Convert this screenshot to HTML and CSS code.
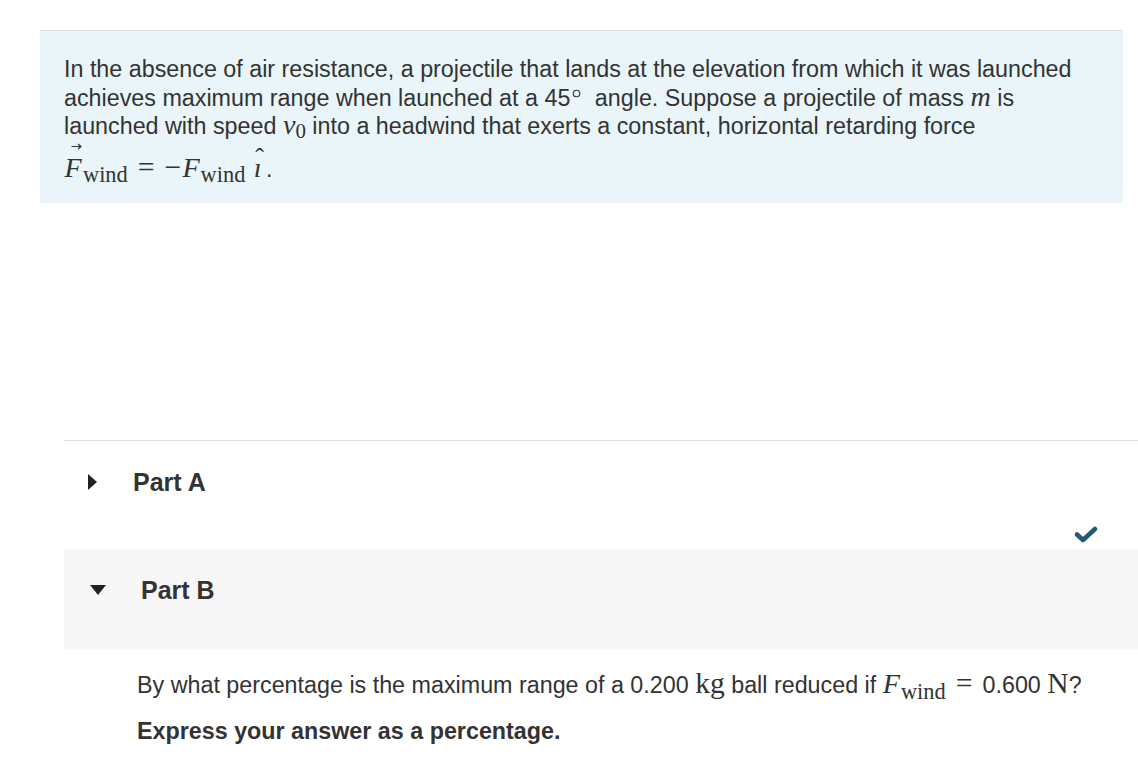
FILE: index.html
```html
<!DOCTYPE html>
<html>
<head>
<meta charset="utf-8">
<link rel="stylesheet" href="styles.css">
</head>
<body>
<div class="intro">
  <p class="intro-text">In the absence of air resistance, a projectile that lands at the elevation from which it was launched achieves maximum range when launched at a 45<svg class="deg" width="9" height="9" viewBox="0 0 9 9"><circle cx="4.5" cy="4.5" r="3.3" fill="none" stroke="#333" stroke-width="1.1"/></svg> angle. Suppose a projectile of mass <span class="mi">m</span> is launched with speed <span class="mi">v</span><span class="msub">0</span> into a headwind that exerts a constant, horizontal retarding force <span class="math"><span class="accent"><span class="acc"><svg width="11" height="7" viewBox="0 0 11 7"><path d="M0.5 3.5H9.5M7 1L10 3.5L7 6" fill="none" stroke="#333" stroke-width="1.2"/></svg></span><span class="mi">F</span></span><span class="rsub">wind</span><span class="mo">=</span><span class="mo2">−</span><span class="mi">F</span><span class="rsub">wind</span><span class="accent hat"><span class="acc">ˆ</span><span class="mi">ı</span></span></span>.</p>
</div>

<div class="parts">
  <div class="part part-a">
    <div class="part-head">
      <span class="tri-right"></span>
      <span class="part-title">Part A</span>
    </div>
    <svg class="check" width="24" height="18" viewBox="0 0 24 18"><path d="M3 9.5L9 15L21 4" fill="none" stroke="#1f5a72" stroke-width="4.5" stroke-linecap="round" stroke-linejoin="round"/></svg>
  </div>
  <div class="part part-b">
    <div class="part-head">
      <span class="tri-down"></span>
      <span class="part-title">Part B</span>
    </div>
  </div>
  <div class="question">
    <p class="q-text">By what percentage is the maximum range of a 0.200 <span class="unit">kg</span> ball reduced if <span class="mi">F</span><span class="rsub">wind</span><span class="mo">=</span>0.600 <span class="unit">N</span>?</p>
    <p class="q-instr">Express your answer as a percentage.</p>
  </div>
</div>
</body>
</html>
```
FILE: styles.css
```css
body {
  margin: 0;
  font-family: "Liberation Sans", Arial, Helvetica, sans-serif;
  color: #333;
  background: #fff;
}

.intro {
  margin: 30px 15px 0 40px;
  background: #e9f5f8;
  border-top: 1px solid #dcdcdc;
  padding: 24px 24px 20px 24px;
}

.intro-text {
  margin: 0;
  font-size: 23.3px;
  line-height: 28.5px;
}

.mi {
  font-family: "Liberation Serif", "Times New Roman", serif;
  font-style: italic;
  font-size: 1.21em;
  line-height: 0;
}

.msub {
  font-family: "Liberation Serif", "Times New Roman", serif;
  font-size: 0.9em;
  vertical-align: -0.2em;
  line-height: 0;
}

.rsub {
  font-family: "Liberation Serif", "Times New Roman", serif;
  font-size: 0.96em;
  vertical-align: -0.25em;
  line-height: 0;
  margin-left: 1px;
}

.deg {
  vertical-align: 8px;
  margin: 0 7px 0 2px;
}

.math {
  white-space: nowrap;
}

.accent {
  display: inline-block;
  text-align: center;
  line-height: 1;
  vertical-align: baseline;
}

.accent .acc {
  display: block;
  height: 11px;
  line-height: 11px;
  font-size: 26px;
}

.accent .acc svg {
  display: block;
  margin: 2px 0 0 7px;
}

.accent .mi {
  display: block;
  font-size: 28px;
  line-height: 1;
}

.hat .acc {
  font-family: "Liberation Serif", serif;
  line-height: 30px;
  padding-left: 4px;
}

.hat {
  margin-left: 6px;
  margin-right: 2px;
}

.mo {
  font-family: "Liberation Serif", serif;
  font-size: 1.28em;
  margin: 0 10px;
  line-height: 0;
}

.mo2 {
  font-family: "Liberation Serif", serif;
  font-size: 1.28em;
  line-height: 0;
  margin-right: 1px;
}

.parts {
  margin: 237px 0 0 64px;
}

.part {
  display: flex;
  align-items: flex-start;
}

.part-head {
  display: flex;
  align-items: center;
  height: 30px;
}

.part-title {
  font-weight: bold;
  font-size: 25px;
  line-height: 30px;
}

.part-a {
  border-top: 1px solid #ddd;
  height: 108px;
  padding-left: 24px;
}

.part-a .part-head {
  margin-top: 26px;
}

.tri-right {
  width: 0;
  height: 0;
  border-top: 8px solid transparent;
  border-bottom: 8px solid transparent;
  border-left: 9px solid #222;
  margin-right: 36px;
}

.check {
  margin-left: auto;
  margin-right: 40px;
  align-self: flex-end;
  margin-bottom: 6px;
}

.part-b {
  background: #f7f7f7;
  height: 100px;
  padding-left: 26px;
}

.part-b .part-head {
  margin-top: 26px;
}

.tri-down {
  width: 0;
  height: 0;
  border-left: 8px solid transparent;
  border-right: 8px solid transparent;
  border-top: 10px solid #222;
  margin-right: 35px;
}

.question {
  padding: 21px 0 0 73px;
  font-size: 23.3px;
}

.q-text {
  margin: 0;
  line-height: 30px;
}

.unit {
  font-family: "Liberation Serif", serif;
  font-size: 1.27em;
  line-height: 0;
}

.q-instr {
  margin: 16px 0 0 0;
  font-weight: bold;
  line-height: 30px;
}
```
